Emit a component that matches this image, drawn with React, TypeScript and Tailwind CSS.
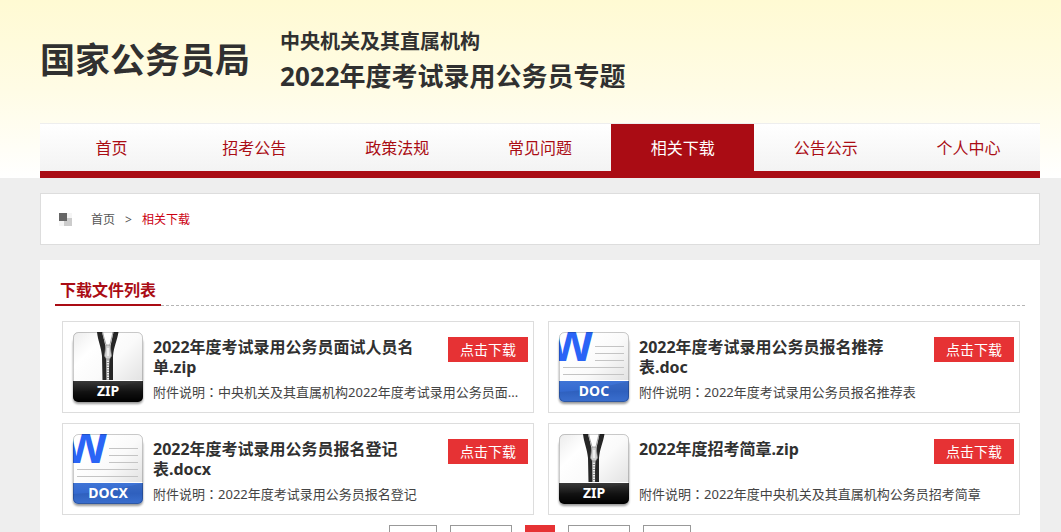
type FileKind = 'ZIP' | 'DOC' | 'DOCX';

const navItems = ['首页', '招考公告', '政策法规', '常见问题', '相关下载', '公告公示', '个人中心'];

const files: { id: number; kind: FileKind; title: string; note: string }[] = [
  {
    id: 1,
    kind: 'ZIP',
    title: '2022年度考试录用公务员面试人员名单.zip',
    note: '中央机关及其直属机构2022年度考试录用公务员面...',
  },
  {
    id: 2,
    kind: 'DOC',
    title: '2022年度考试录用公务员报名推荐表.doc',
    note: '2022年度考试录用公务员报名推荐表',
  },
  {
    id: 3,
    kind: 'DOCX',
    title: '2022年度考试录用公务员报名登记表.docx',
    note: '2022年度考试录用公务员报名登记',
  },
  {
    id: 4,
    kind: 'ZIP',
    title: '2022年度招考简章.zip',
    note: '2022年度中央机关及其直属机构公务员招考简章',
  },
];

const pages = ['首页', '上一页', '1', '下一页', '尾页'];

function FileIcon({ kind, id }: { kind: FileKind; id: number }) {
  const zip = kind === 'ZIP';
  return (
    <svg viewBox="0 0 76 76" className="h-[76px] w-[76px] shrink-0" role="img" aria-label={kind}>
      <defs>
        <linearGradient id={`paper-${id}`} x1="0" y1="0" x2="1" y2="1">
          <stop offset="0" stopColor={zip ? '#ececec' : '#ffffff'} />
          <stop offset="0.25" stopColor="#ffffff" />
          <stop offset="0.5" stopColor="#fafafa" />
          <stop offset="1" stopColor="#d8d8d8" />
        </linearGradient>
        <linearGradient id={`label-${id}`} x1="0" y1="0" x2="0" y2="1">
          <stop offset="0" stopColor={zip ? '#3a3a3a' : '#3f74d6'} />
          <stop offset="0.5" stopColor={zip ? '#151515' : '#3469cf'} />
          <stop offset="1" stopColor={zip ? '#000000' : '#4079e0'} />
        </linearGradient>
        <clipPath id={`tile-${id}`}>
          <rect x="3" y="2" width="70" height="70" rx="5" />
        </clipPath>
        <filter id={`shadow-${id}`} x="-10%" y="-10%" width="120%" height="120%">
          <feGaussianBlur stdDeviation="1" />
        </filter>
      </defs>
      <rect x="3" y="8" width="70" height="66" rx="5" fill="#000" opacity="0.4" filter={`url(#shadow-${id})`} />
      <g clipPath={`url(#tile-${id})`}>
        <rect x="3" y="2" width="70" height="70" fill={`url(#paper-${id})`} />
        {zip ? (
          <>
            <path d="M27 2C28 11 31 16 32 26L32.500 51H37L36.500 25C36 16 34 10 32 2Z" fill="#262626" />
            <path d="M48.500 2C47 11 44 16 43 26L43 51H38.500L39.500 25C40 16 42 10 43.500 2Z" fill="#262626" />
            <path d="M32.500 2C34 9 36 13 36.500 18M43 2C41.500 9 40 13 39.500 18" stroke="#8a8a8a" strokeWidth="0.8" fill="none" />
            <path d="M37.800 27V51" stroke="#f0f0f0" strokeWidth="2.500" />
            <path d="M37.800 27V51" stroke="#8a8a8a" strokeWidth="2.500" strokeDasharray="1 1.500" />
            <path d="M36 15H40L41.500 26L39.500 29H36.500L34.500 26Z" fill="#d2d2d2" stroke="#8d8d8d" strokeWidth="0.7" />
            <path d="M38 18V26" stroke="#f8f8f8" strokeWidth="1.500" />
          </>
        ) : (
          <>
            <text
              x="-6"
              y="31"
              fill="#2a64f6"
              fontFamily="Noto Sans, sans-serif"
              fontSize="45"
              fontWeight="700"
            >
              W
            </text>
            <path
              d="M39 16.500H68M39 23.500H68M39 30.500H68M7 37.500H68M7 44.500H68"
              stroke="#c4c4c4"
              strokeWidth="1"
            />
          </>
        )}
        <rect x="3" y="50" width="70" height="1" fill="#ffffff" />
        <rect x="3" y="51" width="70" height="21" fill={`url(#label-${id})`} />
        <path d="M3 72V62Q38 60 73 51V72Z" fill="#000" opacity="0.08" />
      </g>
      <rect x="3.500" y="2.500" width="69" height="69" rx="5" fill="none" stroke="#000" strokeOpacity="0.2" />
      <text
        x="38"
        y="66"
        textAnchor="middle"
        fill="#fff"
        fontFamily="Noto Sans, sans-serif"
        fontSize="14"
        fontWeight="700"
      >
        {kind}
      </text>
    </svg>
  );
}

function Header() {
  return (
    <header className="bg-linear-to-b from-[#fffad3] via-[#fffce5] to-white pr-[21px] pl-10">
      <div className="flex h-[123px] items-start gap-[30px] text-[#303030]">
        <div className="mt-9 text-[35px] leading-12 font-bold">国家公务员局</div>
        <h1 className="mt-7 font-bold">
          <span className="block text-xl leading-7">中央机关及其直属机构</span>
          <span className="mt-0.5 block text-[26px] leading-9">2022年度考试录用公务员专题</span>
        </h1>
      </div>
      <nav className="grid grid-cols-7 border-t border-b-7 border-t-[#eeeeee] border-b-[#aa0c14] bg-linear-to-b from-white to-[#f3f3f3]">
        {navItems.map((item) => (
          <a
            key={item}
            href="#"
            className={
              item === '相关下载'
                ? 'bg-[#aa0c14] pt-px text-center text-base leading-[46px] text-white'
                : 'pt-px text-center text-base leading-[46px] text-[#aa0c14]'
            }
          >
            {item}
          </a>
        ))}
      </nav>
    </header>
  );
}

function Breadcrumb() {
  return (
    <div className="flex h-[52px] items-center border border-[#dddddd] bg-white pl-[18px] text-xs leading-4">
      <svg viewBox="0 0 13 13" className="mr-[19px] h-[13px] w-[13px]" aria-hidden="true">
        <rect width="13" height="13" fill="#f5f5f5" />
        <rect x="5" y="5" width="8" height="8" fill="#cccccc" />
        <rect width="8" height="8" fill="#666666" />
      </svg>
      <div className="flex gap-[10px] pt-0.5">
        <a href="#" className="text-[#555555]">
          首页
        </a>
        <span className="text-[#555555]">&gt;</span>
        <a href="#" className="text-[#cc0011]">
          相关下载
        </a>
      </div>
    </div>
  );
}

export default function App() {
  return (
    <div className="min-h-screen bg-[#eeeeee] font-['Noto_Sans','Noto_Sans_CJK_SC',sans-serif]">
      <Header />
      <main className="flex flex-col gap-[15px] pt-[15px] pr-[21px] pl-10">
        <Breadcrumb />
        <section className="bg-white p-[15px]">
          <div className="flex items-end">
            <h2 className="border-b-2 border-[#aa0c14] px-[5px] pt-0.5 text-base leading-[27px] font-bold text-[#aa0c14]">
              下载文件列表
            </h2>
            <div className="flex-1 border-b border-dashed border-[#b5b5b5]" />
          </div>
          <ul className="mt-[15px] mr-[5px] ml-[7px] grid grid-cols-2 gap-x-[14px] gap-y-[10px]">
            {files.map((file) => (
              <li key={file.id} className="flex h-[92px] gap-[7px] border border-[#dddddd] pt-2 pr-[5px] pl-[7px]">
                <FileIcon kind={file.kind} id={file.id} />
                <div className="flex min-w-0 flex-1 flex-col pt-[7px]">
                  <div className="flex h-10 items-start gap-5">
                    <h3 className="flex-1 text-base leading-5 font-bold text-[#303030]">{file.title}</h3>
                    <button className="h-[25px] w-20 shrink-0 bg-[#e63234] text-sm leading-[25px] text-white">
                      点击下载
                    </button>
                  </div>
                  <p className="mt-[5px] text-[13px] leading-5 whitespace-nowrap text-[#444444]">
                    附件说明<span className="font-['Noto_Sans_CJK_TC']">：</span>
                    {file.note}
                  </p>
                </div>
              </li>
            ))}
          </ul>
          <div className="mt-[10px] flex justify-center gap-[13px]">
            {pages.map((page) => (
              <button
                key={page}
                className={
                  page === '1'
                    ? 'h-[34px] bg-[#e63234] px-[11px] text-sm text-white'
                    : 'h-[34px] border border-[#999999] px-[9px] text-sm text-[#444444]'
                }
              >
                {page}
              </button>
            ))}
          </div>
        </section>
      </main>
    </div>
  );
}
